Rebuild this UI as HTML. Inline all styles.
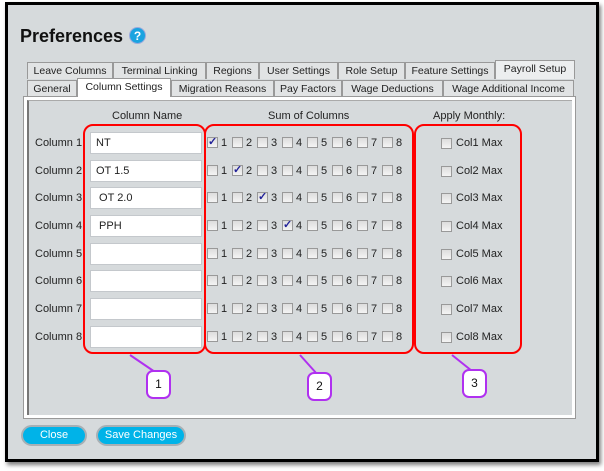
<!DOCTYPE html>
<html><head><meta charset="utf-8"><style>
*{box-sizing:border-box;margin:0;padding:0}
body{width:604px;height:471px;background:#fff;position:relative;overflow:hidden;font-family:"Liberation Sans",sans-serif;font-size:11px;color:#222}
.a{position:absolute}
#frame{left:5px;top:2px;width:594px;height:460px;border:3px solid #000;background:#d6dadc;box-shadow:2px 3px 4px rgba(0,0,0,.5)}
h1{position:absolute;left:20px;top:26px;font-size:18px;font-weight:bold;color:#111}
.help{left:129px;top:27px;width:17px;height:17px;border-radius:50%;background:#1aa3e0;color:#fff;font-size:12px;font-weight:bold;text-align:center;line-height:17px;border:1px solid #9ad}
.tab{position:absolute;height:17px;border:1px solid #999;border-bottom:none;background:#e1e3e4;font-size:10.5px;text-align:center;line-height:16px;white-space:nowrap;color:#222}
.sel{background:#fff}
#panel{left:23px;top:96px;width:553px;height:323px;background:#fff;border:1px solid #999}
#inner{left:27px;top:100px;width:545px;height:315px;background:#d6dadc;border-left:2px solid #777;border-top:1px solid #aaa}
.lbl{position:absolute;left:35px;font-size:11px}
.inp{position:absolute;left:90px;width:112px;height:22px;background:#fff;border:1px solid #c4c8cc;font-size:11px;padding:4px 0 0 5px}
.cb{position:absolute;width:11px;height:11px;border:1px solid #999;background:linear-gradient(#ddd,#f4f4f4)}
.cb.k::after{content:"✓";position:absolute;left:0;top:-3px;font-size:11px;color:#229;font-weight:bold}
.n{position:absolute;font-size:11px;white-space:nowrap}
.red{position:absolute;border:2px solid #f00;border-radius:10px}
.call{position:absolute;width:25px;height:29px;border:2px solid #b030f0;border-radius:7px;background:#fff;text-align:center;line-height:25px;font-size:12px;color:#111}
.btn{position:absolute;top:425px;height:21px;border-radius:11px;background:#00b3e8;color:#fff;font-size:11px;text-align:center;line-height:17px;border:2px solid #a7b0b5}
</style></head><body>
<div id="frame" class="a"></div>
<h1>Preferences</h1>
<div class="a help">?</div>

<div class="tab" style="left:27px;top:62px;width:86px">Leave Columns</div>
<div class="tab" style="left:113px;top:62px;width:93px">Terminal Linking</div>
<div class="tab" style="left:206px;top:62px;width:53px">Regions</div>
<div class="tab" style="left:259px;top:62px;width:79px">User Settings</div>
<div class="tab" style="left:338px;top:62px;width:67px">Role Setup</div>
<div class="tab" style="left:405px;top:62px;width:90px">Feature Settings</div>
<div class="tab" style="left:495px;top:60px;width:80px;height:19px;background:#eceeef">Payroll Setup</div>
<div class="tab" style="left:27px;top:80px;width:50px">General</div>
<div class="tab sel" style="left:77px;top:78px;width:94px;height:19px;border-bottom:none;z-index:2">Column Settings</div>
<div class="tab" style="left:171px;top:80px;width:103px">Migration Reasons</div>
<div class="tab" style="left:274px;top:80px;width:68px">Pay Factors</div>
<div class="tab" style="left:342px;top:80px;width:101px">Wage Deductions</div>
<div class="tab" style="left:443px;top:80px;width:131px">Wage Additional Income</div>

<div id="panel" class="a"></div>
<div id="inner" class="a"></div>

<div class="a" style="left:112px;top:110px">Column Name</div>
<div class="a" style="left:268px;top:110px">Sum of Columns</div>
<div class="a" style="left:433px;top:110px">Apply Monthly:</div>

<div class="red" style="left:83px;top:124px;width:123px;height:230px"></div>
<div class="red" style="left:204px;top:124px;width:210px;height:230px"></div>
<div class="red" style="left:414px;top:124px;width:108px;height:230px"></div>

<div class="lbl" style="top:137px">Column 1</div><div class="inp" style="top:132px">NT</div>
<div class="lbl" style="top:165px">Column 2</div><div class="inp" style="top:160px">OT 1.5</div>
<div class="lbl" style="top:192px">Column 3</div><div class="inp" style="top:187px">&nbsp;OT 2.0</div>
<div class="lbl" style="top:220px">Column 4</div><div class="inp" style="top:215px">&nbsp;PPH</div>
<div class="lbl" style="top:248px">Column 5</div><div class="inp" style="top:243px"></div>
<div class="lbl" style="top:275px">Column 6</div><div class="inp" style="top:270px"></div>
<div class="lbl" style="top:303px">Column 7</div><div class="inp" style="top:298px"></div>
<div class="lbl" style="top:331px">Column 8</div><div class="inp" style="top:326px"></div>

<svg class="a" style="left:0;top:0" width="604" height="471">
<g stroke="#b030f0" stroke-width="2" fill="none">
<line x1="130" y1="355" x2="155" y2="372"/>
<line x1="300" y1="355" x2="317" y2="374"/>
<line x1="452" y1="355" x2="472" y2="371"/>
</g></svg>
<div class="call" style="left:146px;top:370px">1</div>
<div class="call" style="left:307px;top:372px">2</div>
<div class="call" style="left:462px;top:369px">3</div>

<div class="btn" style="left:21px;width:66px">Close</div>
<div class="btn" style="left:96px;width:90px">Save Changes</div>

<div class="a" style="left:0;top:0">
<div class="cb k" style="left:207px;top:137px"></div><div class="n" style="left:221px;top:137px">1</div><div class="cb" style="left:232px;top:137px"></div><div class="n" style="left:246px;top:137px">2</div><div class="cb" style="left:257px;top:137px"></div><div class="n" style="left:271px;top:137px">3</div><div class="cb" style="left:282px;top:137px"></div><div class="n" style="left:296px;top:137px">4</div><div class="cb" style="left:307px;top:137px"></div><div class="n" style="left:321px;top:137px">5</div><div class="cb" style="left:332px;top:137px"></div><div class="n" style="left:346px;top:137px">6</div><div class="cb" style="left:357px;top:137px"></div><div class="n" style="left:371px;top:137px">7</div><div class="cb" style="left:382px;top:137px"></div><div class="n" style="left:396px;top:137px">8</div>
<div class="cb" style="left:207px;top:165px"></div><div class="n" style="left:221px;top:165px">1</div><div class="cb k" style="left:232px;top:165px"></div><div class="n" style="left:246px;top:165px">2</div><div class="cb" style="left:257px;top:165px"></div><div class="n" style="left:271px;top:165px">3</div><div class="cb" style="left:282px;top:165px"></div><div class="n" style="left:296px;top:165px">4</div><div class="cb" style="left:307px;top:165px"></div><div class="n" style="left:321px;top:165px">5</div><div class="cb" style="left:332px;top:165px"></div><div class="n" style="left:346px;top:165px">6</div><div class="cb" style="left:357px;top:165px"></div><div class="n" style="left:371px;top:165px">7</div><div class="cb" style="left:382px;top:165px"></div><div class="n" style="left:396px;top:165px">8</div>
<div class="cb" style="left:207px;top:192px"></div><div class="n" style="left:221px;top:192px">1</div><div class="cb" style="left:232px;top:192px"></div><div class="n" style="left:246px;top:192px">2</div><div class="cb k" style="left:257px;top:192px"></div><div class="n" style="left:271px;top:192px">3</div><div class="cb" style="left:282px;top:192px"></div><div class="n" style="left:296px;top:192px">4</div><div class="cb" style="left:307px;top:192px"></div><div class="n" style="left:321px;top:192px">5</div><div class="cb" style="left:332px;top:192px"></div><div class="n" style="left:346px;top:192px">6</div><div class="cb" style="left:357px;top:192px"></div><div class="n" style="left:371px;top:192px">7</div><div class="cb" style="left:382px;top:192px"></div><div class="n" style="left:396px;top:192px">8</div>
<div class="cb" style="left:207px;top:220px"></div><div class="n" style="left:221px;top:220px">1</div><div class="cb" style="left:232px;top:220px"></div><div class="n" style="left:246px;top:220px">2</div><div class="cb" style="left:257px;top:220px"></div><div class="n" style="left:271px;top:220px">3</div><div class="cb k" style="left:282px;top:220px"></div><div class="n" style="left:296px;top:220px">4</div><div class="cb" style="left:307px;top:220px"></div><div class="n" style="left:321px;top:220px">5</div><div class="cb" style="left:332px;top:220px"></div><div class="n" style="left:346px;top:220px">6</div><div class="cb" style="left:357px;top:220px"></div><div class="n" style="left:371px;top:220px">7</div><div class="cb" style="left:382px;top:220px"></div><div class="n" style="left:396px;top:220px">8</div>
<div class="cb" style="left:207px;top:248px"></div><div class="n" style="left:221px;top:248px">1</div><div class="cb" style="left:232px;top:248px"></div><div class="n" style="left:246px;top:248px">2</div><div class="cb" style="left:257px;top:248px"></div><div class="n" style="left:271px;top:248px">3</div><div class="cb" style="left:282px;top:248px"></div><div class="n" style="left:296px;top:248px">4</div><div class="cb" style="left:307px;top:248px"></div><div class="n" style="left:321px;top:248px">5</div><div class="cb" style="left:332px;top:248px"></div><div class="n" style="left:346px;top:248px">6</div><div class="cb" style="left:357px;top:248px"></div><div class="n" style="left:371px;top:248px">7</div><div class="cb" style="left:382px;top:248px"></div><div class="n" style="left:396px;top:248px">8</div>
<div class="cb" style="left:207px;top:275px"></div><div class="n" style="left:221px;top:275px">1</div><div class="cb" style="left:232px;top:275px"></div><div class="n" style="left:246px;top:275px">2</div><div class="cb" style="left:257px;top:275px"></div><div class="n" style="left:271px;top:275px">3</div><div class="cb" style="left:282px;top:275px"></div><div class="n" style="left:296px;top:275px">4</div><div class="cb" style="left:307px;top:275px"></div><div class="n" style="left:321px;top:275px">5</div><div class="cb" style="left:332px;top:275px"></div><div class="n" style="left:346px;top:275px">6</div><div class="cb" style="left:357px;top:275px"></div><div class="n" style="left:371px;top:275px">7</div><div class="cb" style="left:382px;top:275px"></div><div class="n" style="left:396px;top:275px">8</div>
<div class="cb" style="left:207px;top:303px"></div><div class="n" style="left:221px;top:303px">1</div><div class="cb" style="left:232px;top:303px"></div><div class="n" style="left:246px;top:303px">2</div><div class="cb" style="left:257px;top:303px"></div><div class="n" style="left:271px;top:303px">3</div><div class="cb" style="left:282px;top:303px"></div><div class="n" style="left:296px;top:303px">4</div><div class="cb" style="left:307px;top:303px"></div><div class="n" style="left:321px;top:303px">5</div><div class="cb" style="left:332px;top:303px"></div><div class="n" style="left:346px;top:303px">6</div><div class="cb" style="left:357px;top:303px"></div><div class="n" style="left:371px;top:303px">7</div><div class="cb" style="left:382px;top:303px"></div><div class="n" style="left:396px;top:303px">8</div>
<div class="cb" style="left:207px;top:331px"></div><div class="n" style="left:221px;top:331px">1</div><div class="cb" style="left:232px;top:331px"></div><div class="n" style="left:246px;top:331px">2</div><div class="cb" style="left:257px;top:331px"></div><div class="n" style="left:271px;top:331px">3</div><div class="cb" style="left:282px;top:331px"></div><div class="n" style="left:296px;top:331px">4</div><div class="cb" style="left:307px;top:331px"></div><div class="n" style="left:321px;top:331px">5</div><div class="cb" style="left:332px;top:331px"></div><div class="n" style="left:346px;top:331px">6</div><div class="cb" style="left:357px;top:331px"></div><div class="n" style="left:371px;top:331px">7</div><div class="cb" style="left:382px;top:331px"></div><div class="n" style="left:396px;top:331px">8</div>

<div class="cb" style="left:441px;top:138px"></div><div class="n" style="left:456px;top:137px">Col1 Max</div>
<div class="cb" style="left:441px;top:166px"></div><div class="n" style="left:456px;top:165px">Col2 Max</div>
<div class="cb" style="left:441px;top:193px"></div><div class="n" style="left:456px;top:192px">Col3 Max</div>
<div class="cb" style="left:441px;top:221px"></div><div class="n" style="left:456px;top:220px">Col4 Max</div>
<div class="cb" style="left:441px;top:249px"></div><div class="n" style="left:456px;top:248px">Col5 Max</div>
<div class="cb" style="left:441px;top:276px"></div><div class="n" style="left:456px;top:275px">Col6 Max</div>
<div class="cb" style="left:441px;top:304px"></div><div class="n" style="left:456px;top:303px">Col7 Max</div>
<div class="cb" style="left:441px;top:332px"></div><div class="n" style="left:456px;top:331px">Col8 Max</div>
</div>
</body></html>
